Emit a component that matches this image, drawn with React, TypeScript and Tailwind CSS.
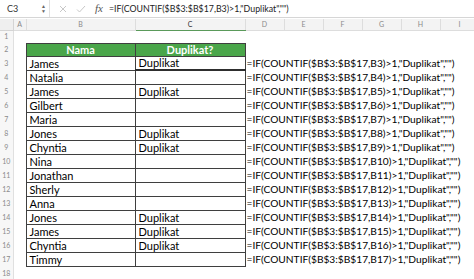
import React from 'react';

const names: [string, string][] = [
  ['James', 'Duplikat'],
  ['Natalia', ''],
  ['James', 'Duplikat'],
  ['Gilbert', ''],
  ['Maria', ''],
  ['Jones', 'Duplikat'],
  ['Chyntia', 'Duplikat'],
  ['Nina', ''],
  ['Jonathan', ''],
  ['Sherly', ''],
  ['Anna', ''],
  ['Jones', 'Duplikat'],
  ['James', 'Duplikat'],
  ['Chyntia', 'Duplikat'],
  ['Timmy', ''],
];

const formula = (row: number) => `=IF(COUNTIF($B$3:$B$17,B${row})>1,"Duplikat","")`;

const cols = ['A', 'B', 'C', 'D', 'E', 'F', 'G', 'H', 'I'];
const colWidths = [13, 109, 110, 39, 39, 39, 39, 39, 39];

function RowHead({ n }: { n: number | string }) {
  return (
    <td className="border-r border-[#e0e0e0] bg-[#f7f7f7] text-center text-[7px] text-[#8a8a8a] leading-none">
      {n}
    </td>
  );
}

export default function App() {
  return (
    <div
      className="w-[474px] h-[279px] overflow-hidden bg-white text-black"
      style={{ fontFamily: 'Lato, "Open Sans", sans-serif' }}
    >
      {/* Formula bar */}
      <div className="flex h-[18px] items-center border-b border-[#d6d6d6] bg-white">
        <div className="flex h-full w-[50px] items-center justify-between border-r border-[#e2e2e2] pl-[7px] pr-[3px]">
          <span className="text-[9px] text-[#333]">C3</span>
          <span className="flex flex-col text-[5px] leading-[5px] text-[#666]">
            <span>▲</span>
            <span>▼</span>
          </span>
        </div>
        <div className="flex items-center gap-[9px] pl-[9px] text-[#c8c8c8]">
          <svg width="8" height="8" viewBox="0 0 8 8" fill="none" stroke="currentColor" strokeWidth="1">
            <path d="M1 1L7 7M7 1L1 7" />
          </svg>
          <svg width="10" height="8" viewBox="0 0 10 8" fill="none" stroke="currentColor" strokeWidth="1">
            <path d="M1 4.5L3.5 7L9 1" />
          </svg>
          <span className="text-[11px] italic text-[#555]" style={{ fontFamily: '"Liberation Serif", serif' }}>
            fx
          </span>
        </div>
        <span className="ml-[6px] whitespace-nowrap text-[8.8px] text-[#222]">{formula(3)}</span>
      </div>

      <table className="table-fixed border-collapse mt-[1px]" style={{ width: 13 + colWidths.reduce((a, b) => a + b, 0) }}>
        <colgroup>
          <col className="w-[13px]" />
          {colWidths.map((w, i) => (
            <col key={i} style={{ width: w }} />
          ))}
        </colgroup>
        <tbody>
          {/* Column headers */}
          <tr className="h-[11px] bg-[#f3f3f3]">
            <td className="border-r border-b border-[#d4d4d4] bg-[#efefef]" />
            {cols.map((c) => (
              <td
                key={c}
                className={`border-r border-b border-[#dddddd] text-center text-[7px] leading-none ${
                  c === 'C' ? 'text-[#333] border-b-[#5a9a5a]' : 'text-[#8a8a8a]'
                }`}
              >
                {c}
              </td>
            ))}
          </tr>

          <tr className="h-[13px]">
            <RowHead n={1} />
            <td colSpan={9} />
          </tr>

          <tr className="h-[13px]">
            <RowHead n={2} />
            <td />
            <td className="border border-[#3f3f3f] bg-[#4aa64a] text-center text-[11px] font-bold leading-none text-white">
              Nama
            </td>
            <td className="border border-[#3f3f3f] bg-[#4aa64a] text-center text-[11px] font-bold leading-none text-white">
              Duplikat?
            </td>
            <td colSpan={6} />
          </tr>

          {names.map(([name, dup], i) => {
            const r = i + 3;
            return (
              <tr key={r} className="h-[14px]">
                <RowHead n={r} />
                <td />
                <td className="border border-[#3f3f3f] pl-[3px] text-[11px] leading-none">{name}</td>
                <td
                  className={`border border-[#3f3f3f] pl-[3px] text-[11px] leading-none ${
                    r === 3 ? 'border-b-2 border-b-[#2e2e2e]' : ''
                  }`}
                >
                  {dup}
                </td>
                <td colSpan={6} className="whitespace-nowrap pl-[1px] text-[10.2px] leading-none">
                  {formula(r)}
                </td>
              </tr>
            );
          })}

          <tr className="h-[14px]">
            <RowHead n={18} />
            <td colSpan={9} />
          </tr>
        </tbody>
      </table>
    </div>
  );
}
